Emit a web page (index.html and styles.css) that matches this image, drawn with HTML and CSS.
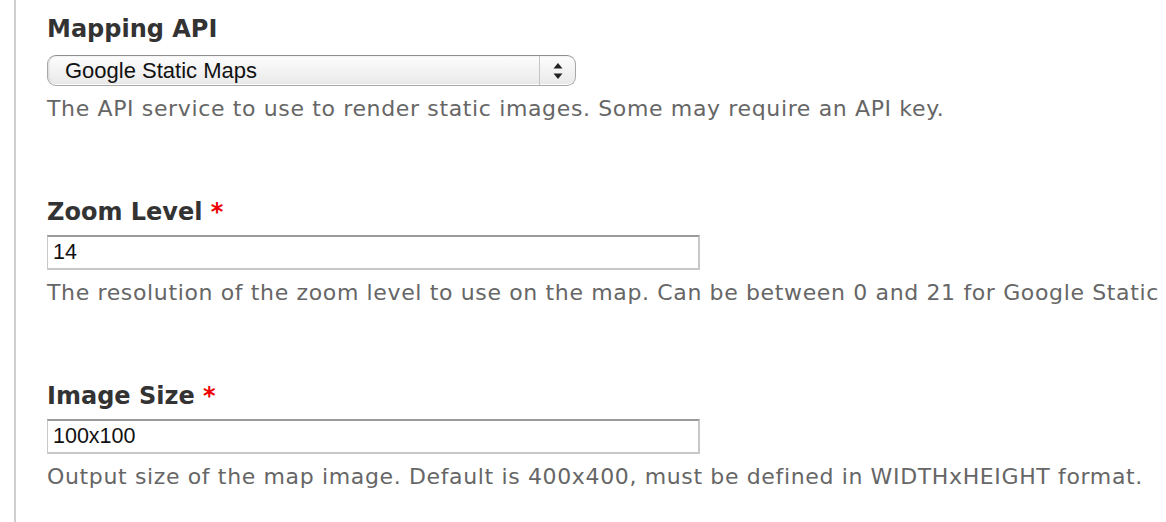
FILE: index.html
```html
<!DOCTYPE html>
<html>
<head>
<meta charset="utf-8">
<link rel="stylesheet" href="styles.css">
</head>
<body>
<div class="panel">
  <div class="field field-first">
    <label class="label">Mapping API</label>
    <div class="select">
      <span class="select-text">Google Static Maps</span>
      <span class="select-arrows">
        <svg width="10" height="16" viewBox="0 0 10 16"><path d="M5 0 L9.5 5.5 L0.5 5.5 Z" fill="#222"/><path d="M5 16 L9.5 10.5 L0.5 10.5 Z" fill="#222"/></svg>
      </span>
    </div>
    <div class="desc">The API service to use to render static images. Some may require an API key.</div>
  </div>
  <div class="field">
    <label class="label">Zoom Level <span class="req">*</span></label>
    <div class="input">14</div>
    <div class="desc">The resolution of the zoom level to use on the map. Can be between 0 and 21 for Google Static Maps.</div>
  </div>
  <div class="field">
    <label class="label">Image Size <span class="req">*</span></label>
    <div class="input">100x100</div>
    <div class="desc">Output size of the map image. Default is 400x400, must be defined in WIDTHxHEIGHT format.</div>
  </div>
</div>
</body>
</html>
```

FILE: styles.css
```css
html, body {
  margin: 0;
  padding: 0;
  background: #fff;
}
body {
  width: 1166px;
  height: 522px;
  overflow: hidden;
}
.panel {
  margin-left: 14px;
  border-left: 2px solid #cfcfcf;
  padding-left: 31px;
  padding-top: 14px;
  height: 522px;
  box-sizing: border-box;
  white-space: nowrap;
}
.field {
  margin-top: 75px;
}
.field-first {
  margin-top: 0;
}
.label {
  display: block;
  font-family: "DejaVu Sans", Verdana, sans-serif;
  font-weight: bold;
  font-size: 24px;
  line-height: 30px;
  color: #333;
}
.req {
  color: #e00;
}
.select {
  margin-top: 11px;
  width: 529px;
  height: 31px;
  box-sizing: border-box;
  border: 1px solid #a8a8a8;
  border-top-color: #8e8e8e;
  border-radius: 9px;
  background: linear-gradient(#fdfdfd, #f3f3f3 50%, #e9e9e9);
  box-shadow: inset 0 -1px 0 #fff, inset 1px 0 2px rgba(0,0,0,0.12);
  display: flex;
  align-items: center;
}
.select-text {
  flex: 1;
  padding-left: 17px;
  font-family: "Liberation Sans", Arial, sans-serif;
  font-size: 22px;
  color: #111;
}
.select-arrows {
  width: 35px;
  height: 100%;
  border-left: 1px solid #c4c4c4;
  display: flex;
  align-items: center;
  justify-content: center;
}
.select-arrows svg {
  display: block;
}
.input {
  margin-top: 8px;
  width: 653px;
  height: 35px;
  box-sizing: border-box;
  border: 2px solid #c8c8c8;
  border-top-color: #9a9a9a;
  border-left-width: 1px;
  padding-left: 5px;
  font-family: "Liberation Sans", Arial, sans-serif;
  font-size: 21.5px;
  line-height: 31px;
  color: #111;
}
.desc {
  margin-top: 10px;
  font-family: "DejaVu Sans", Verdana, sans-serif;
  font-size: 22px;
  letter-spacing: 0.64px;
  line-height: 26px;
  color: #666;
}
```
